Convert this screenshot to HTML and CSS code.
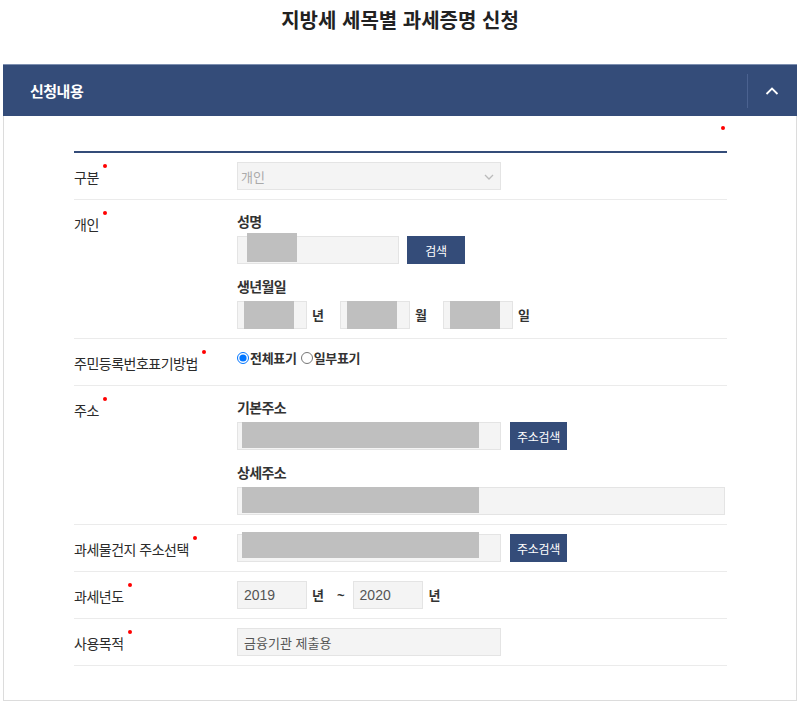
FILE: index.html
```html
<!DOCTYPE html>
<html lang="ko">
<head>
<meta charset="utf-8">
<title>지방세 세목별 과세증명 신청</title>
<link rel="stylesheet" href="styles.css">
</head>
<body>
<h1 class="page-title">지방세 세목별 과세증명 신청</h1>
<section class="panel">
  <header class="panel-head">
    <h2 class="panel-title">신청내용</h2>
    <div class="toggle">
      <svg width="14" height="8" viewBox="0 0 14 8"><path d="M1.5 7 L7 1.5 L12.5 7" fill="none" stroke="#fff" stroke-width="1.8"/></svg>
    </div>
  </header>
  <div class="panel-body">
    <div class="legend"><span class="dot"></span></div>
    <div class="form">
      <div class="row">
        <div class="label"><span class="req">구분</span></div>
        <div class="field">
          <div class="select">
            <span>개인</span>
            <svg width="10" height="6" viewBox="0 0 10 6"><path d="M1 1 L5 5 L9 1" fill="none" stroke="#bbb" stroke-width="1.3"/></svg>
          </div>
        </div>
      </div>
      <div class="row">
        <div class="label"><span class="req">개인</span></div>
        <div class="field stack">
          <div class="sub">성명</div>
          <div class="line">
            <div class="input w162"><span class="mask mask-name"></span></div>
            <button class="btn">검색</button>
          </div>
          <div class="sub gap">생년월일</div>
          <div class="line">
            <div class="input w70"><span class="mask mask-date"></span></div><span class="unit">년</span>
            <div class="input w70"><span class="mask mask-date"></span></div><span class="unit">월</span>
            <div class="input w70"><span class="mask mask-date"></span></div><span class="unit">일</span>
          </div>
        </div>
      </div>
      <div class="row">
        <div class="label"><span class="req">주민등록번호표기방법</span></div>
        <div class="field">
          <div class="radios">
            <label class="radio"><input type="radio" name="disp" checked>전체표기</label>
            <label class="radio"><input type="radio" name="disp">일부표기</label>
          </div>
        </div>
      </div>
      <div class="row">
        <div class="label"><span class="req">주소</span></div>
        <div class="field stack">
          <div class="sub">기본주소</div>
          <div class="line">
            <div class="input w264"><span class="mask mask-addr"></span></div>
            <button class="btn wide">주소검색</button>
          </div>
          <div class="sub gap">상세주소</div>
          <div class="line">
            <div class="input full"><span class="mask mask-addr"></span></div>
          </div>
        </div>
      </div>
      <div class="row">
        <div class="label"><span class="req">과세물건지 주소선택</span></div>
        <div class="field">
          <div class="line">
            <div class="input w264"><span class="mask mask-addr up"></span></div>
            <button class="btn wide">주소검색</button>
          </div>
        </div>
      </div>
      <div class="row">
        <div class="label"><span class="req">과세년도</span></div>
        <div class="field">
          <div class="line">
            <div class="input w70 num">2019</div><span class="unit y1">년</span><span class="tilde">~</span>
            <div class="input w70 num">2020</div><span class="unit y2">년</span>
          </div>
        </div>
      </div>
      <div class="row">
        <div class="label"><span class="req">사용목적</span></div>
        <div class="field">
          <div class="input w264 text">금융기관 제출용</div>
        </div>
      </div>
    </div>
  </div>
</section>
</body>
</html>
```

FILE: styles.css
```css
* { box-sizing: border-box; }
html, body { margin: 0; padding: 0; background: #fff; }
body {
  width: 800px;
  font-family: "Noto Sans CJK KR", "Noto Sans", sans-serif;
  color: #333;
}
.page-title {
  margin: 0;
  height: 64px;
  line-height: 40px;
  text-align: center;
  font-size: 20px;
  font-weight: 700;
  letter-spacing: 0;
  color: #222;
}
.panel {
  margin: 0 3px;
  border: 1px solid #dcdcdc;
  border-top: 0;
}
.panel-head {
  height: 52px;
  background: #344c79;
  border-top: 1px solid #7d8fb0;
  display: flex;
  align-items: center;
  justify-content: space-between;
  margin: 0 -1px;
}
.panel-title {
  margin: 0 0 0 27px;
  font-size: 15px;
  font-weight: 700;
  letter-spacing: -0.5px;
  color: #fff;
  line-height: 20px;
}
.toggle {
  width: 50px;
  height: 34px;
  border-left: 1px solid #4b6290;
  display: flex;
  align-items: center;
  justify-content: center;
}
.toggle svg { display: block; margin-left: -2px; }
.panel-body {
  padding: 0 69px 34px 70px;
}
.legend {
  height: 35px;
  display: flex;
  justify-content: flex-end;
  padding: 10px 2px 0 0;
}
.dot {
  display: block;
  width: 4px;
  height: 4px;
  border-radius: 50%;
  background: #f00;
}
.form {
  border-top: 2px solid #344c79;
}
.row {
  display: grid;
  grid-template-columns: 163px 1fr;
  border-bottom: 1px solid #ebebeb;
}
.label {
  padding-top: 14px;
  font-size: 14px;
  line-height: 20px;
  letter-spacing: -0.5px;
  color: #2b2b2b;
}
.req { position: relative; }
.req::after {
  content: "";
  position: absolute;
  right: -8px;
  top: -3px;
  width: 4px;
  height: 4px;
  border-radius: 50%;
  background: #f00;
}
.field { padding: 9px 0; }
.field.stack { padding: 11px 0 9px; }
.sub {
  font-size: 14px;
  font-weight: 700;
  line-height: 20px;
  letter-spacing: -0.6px;
  color: #333;
  margin-bottom: 5px;
}
.sub.gap { margin-top: 12px; }
.line {
  display: flex;
  align-items: center;
  height: 28px;
}
.select, .input {
  height: 28px;
  background: #f4f4f4;
  border: 1px solid #e4e4e4;
  position: relative;
}
.select {
  width: 264px;
  display: flex;
  align-items: center;
  justify-content: space-between;
  padding: 0 6px 0 3px;
  font-size: 13px;
  letter-spacing: 0;
  color: #aaa;
}
.select svg { display: block; margin-top: 1px; }
.w162 { width: 162px; }
.w70 { width: 70px; }
.w264 { width: 264px; }
.full { width: 100%; margin-right: 2px; }
.mask {
  position: absolute;
  background: #bfbfbf;
}
.mask-name { left: 9px; top: -4px; width: 50px; height: 29px; }
.mask-date { left: 6px; top: -1px; width: 50px; height: 28px; }
.mask-addr { left: 4px; top: -1px; width: 237px; height: 26px; }
.mask-addr.up { top: -3px; }
.btn {
  height: 28px;
  width: 58px;
  margin: 0 0 0 8px;
  padding: 0;
  border: 0;
  background: #344c79;
  color: #fff;
  font-family: "Noto Sans CJK KR", sans-serif;
  font-size: 12px;
  letter-spacing: -0.3px;
}
.btn.wide { margin-left: 9px; width: 57px; }
.unit {
  font-size: 13px;
  font-weight: 700;
  line-height: 20px;
  color: #333;
  margin: 0 16px 0 5px;
}
.unit.y1 { margin: 0 13px 0 5px; }
.unit.y2 { margin: 0 0 0 6px; }
.tilde {
  font-family: "Liberation Sans", sans-serif;
  font-size: 13px;
  font-weight: 700;
  color: #333;
  margin-right: 8px;
}
.num, .text {
  display: flex;
  align-items: center;
  padding-left: 6px;
  color: #555;
}
.num {
  font-family: "Liberation Sans", sans-serif;
  font-size: 14px;
}
.text {
  font-size: 13px;
  letter-spacing: 0;
}
.radios {
  display: flex;
  height: 28px;
  line-height: 20px;
  font-size: 13px;
  font-weight: 700;
  letter-spacing: -0.3px;
  color: #333;
}
.radio {
  display: flex;
  align-items: center;
  height: 20px;
  margin-right: 4px;
}
.radio input {
  width: 12px;
  height: 12px;
  margin: 0 1px 0 0;
}
```
